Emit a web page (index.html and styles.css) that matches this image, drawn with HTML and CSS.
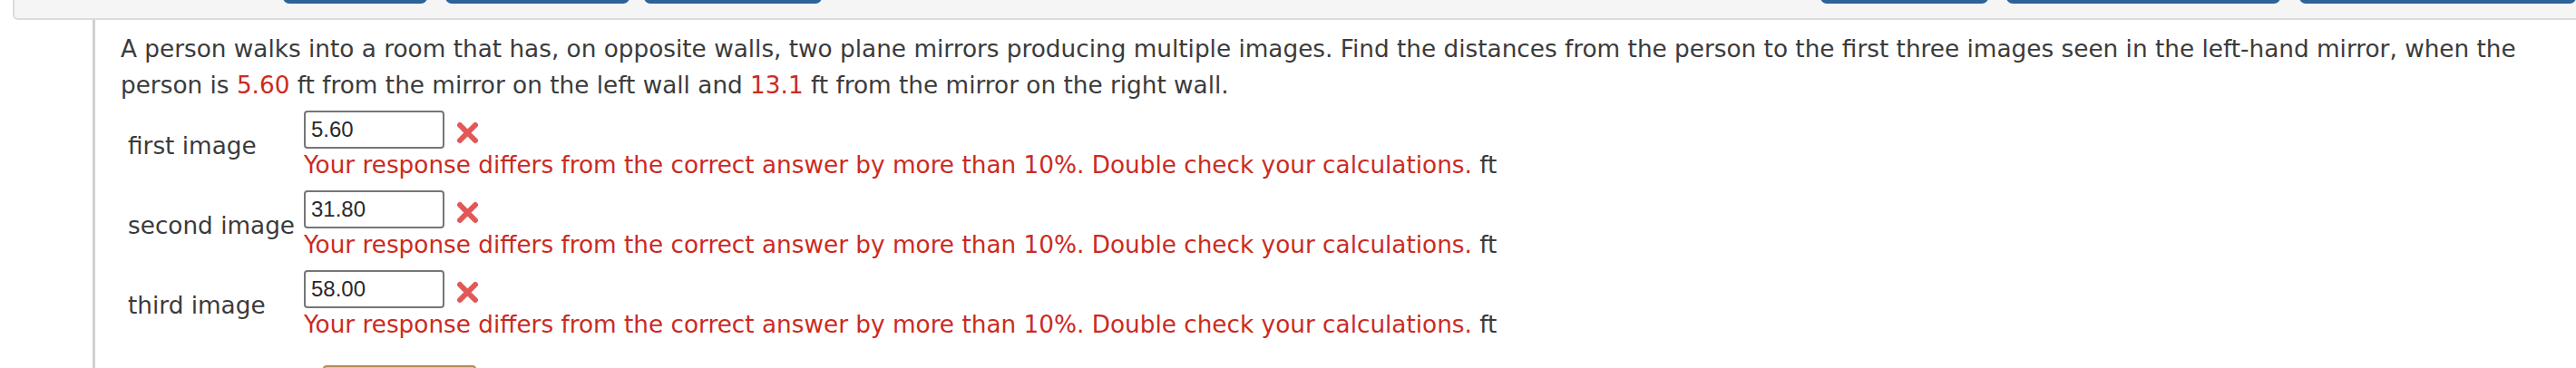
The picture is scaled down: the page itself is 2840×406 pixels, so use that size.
FILE: index.html
```html
<!DOCTYPE html>
<html lang="en">
<head>
<meta charset="utf-8">
<title>Question</title>
<link rel="stylesheet" href="styles.css">
</head>
<body>
<div class="topbar">
  <div class="btns">
    <span class="btn b1"></span>
    <span class="btn b2"></span>
    <span class="btn b3"></span>
    <span class="btn b4"></span>
    <span class="btn b5"></span>
    <span class="btn b6"></span>
  </div>
</div>
<div class="main">
  <p class="q"><span class="ln">A person walks into a room that has, on opposite walls, two plane mirrors producing multiple images. Find the distances from the person to the first three images seen in the left-hand mirror, when the</span><br><span class="ln">person is <span class="red">5.60</span> ft from the mirror on the left wall and <span class="red">13.1</span> ft from the mirror on the right wall.</span></p>
  <table class="answers">
    <tr>
      <td class="lbl">first image</td>
      <td class="ans">
        <div class="inrow">
          <div class="field">5.60</div>
          <svg class="xmark" viewBox="0 0 27 25" width="27" height="25"><path d="M5 4 L22 21 M22 4 L5 21" /></svg>
        </div>
        <div class="msg"><span class="red">Your response differs from the correct answer by more than 10%. Double check your calculations.</span> ft</div>
      </td>
    </tr>
    <tr>
      <td class="lbl">second image</td>
      <td class="ans">
        <div class="inrow">
          <div class="field">31.80</div>
          <svg class="xmark" viewBox="0 0 27 25" width="27" height="25"><path d="M5 4 L22 21 M22 4 L5 21" /></svg>
        </div>
        <div class="msg"><span class="red">Your response differs from the correct answer by more than 10%. Double check your calculations.</span> ft</div>
      </td>
    </tr>
    <tr>
      <td class="lbl">third image</td>
      <td class="ans">
        <div class="inrow">
          <div class="field">58.00</div>
          <svg class="xmark" viewBox="0 0 27 25" width="27" height="25"><path d="M5 4 L22 21 M22 4 L5 21" /></svg>
        </div>
        <div class="msg"><span class="red">Your response differs from the correct answer by more than 10%. Double check your calculations.</span> ft</div>
      </td>
    </tr>
  </table>
  <div class="submitrow"><span class="submit"></span></div>
</div>
</body>
</html>
```
FILE: styles.css
```css
html, body {
  margin: 0;
  padding: 0;
  background: #ffffff;
  overflow: hidden;
}
body {
  width: 2840px;
  height: 406px;
  font-family: "DejaVu Sans", Verdana, sans-serif;
  color: #3b3b3b;
}
.topbar {
  margin-left: 14px;
  height: 20px;
  background: #f5f5f5;
  border-left: 2px solid #dcdcdc;
  border-bottom: 2px solid #dcdcdc;
  border-bottom-left-radius: 6px;
}
.btns {
  display: flex;
  height: 4px;
  overflow: visible;
}
.btn {
  display: block;
  height: 40px;
  margin-top: -36px;
  background: #2c6398;
  border-radius: 0 0 7px 7px;
}
.b1 { margin-left: 296px; width: 195px; }
.b2 { margin-left: 20px; width: 250px; }
.b3 { margin-left: 16px; width: 240px; }
.b4 { margin-left: 1101px; width: 228px; }
.b5 { margin-left: 20px; width: 371px; }
.b6 { margin-left: 21px; width: 374px; }
.main {
  margin-left: 102px;
  border-left: 3px solid #d0d0d0;
  height: 384px;
  overflow: hidden;
  padding-left: 28px;
  padding-top: 12px;
  box-sizing: border-box;
}
.q {
  margin: 0;
  font-size: 26.3px;
  line-height: 40px;
  width: 2680px;
  white-space: nowrap;
}
.red {
  color: #cc2a1f;
}
.answers {
  border-collapse: collapse;
  border-spacing: 0;
  margin-top: 5px;
  font-size: 26.3px;
}
.answers td {
  padding: 3px 0 7px;
}
.answers td.lbl {
  width: 202px;
  min-width: 202px;
  max-width: 202px;
  box-sizing: border-box;
  padding-left: 8px;
  vertical-align: middle;
  white-space: nowrap;
}
.answers td.ans {
  vertical-align: top;
}
.inrow {
  display: flex;
  align-items: flex-start;
  height: 42px;
}
.field {
  width: 155px;
  height: 42px;
  box-sizing: border-box;
  border: 2px solid #767676;
  border-radius: 4px;
  padding-left: 6px;
  font-family: "Liberation Sans", Arial, sans-serif;
  font-size: 24px;
  line-height: 38px;
  color: #2a2a2a;
}
.xmark {
  margin-left: 12px;
  margin-top: 12px;
  fill: none;
  stroke: #e25858;
  stroke-width: 6;
  stroke-linecap: round;
}
.msg {
  line-height: 36px;
  white-space: nowrap;
}
.submitrow {
  margin-top: 20px;
  padding-left: 223px;
}
.submit {
  display: block;
  width: 165px;
  height: 30px;
  background: #e9c99b;
  border: 2px solid #b98a55;
  border-radius: 4px;
}
```
